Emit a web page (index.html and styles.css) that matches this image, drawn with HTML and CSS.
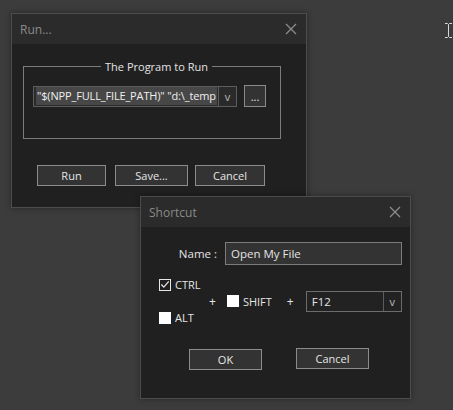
FILE: index.html
```html
<!DOCTYPE html>
<html lang="en">
<head>
  <meta charset="UTF-8">
  <meta name="viewport" content="width=device-width, initial-scale=1.0">
  <title>Run / Shortcut</title>
  <link rel="stylesheet" href="styles.css">
</head>
<body>
  <div class="desktop">

    <!-- Run dialog -->
    <div class="dialog run-dialog">
      <div class="titlebar">
        <span class="title">Run...</span>
        <svg class="close" width="12" height="12" viewBox="0 0 12 12"><path d="M1 1L11 11M11 1L1 11" stroke="#8c8c8c" stroke-width="1.3"/></svg>
      </div>
      <div class="dialog-body run-body">
        <fieldset class="group">
          <legend>The Program to Run</legend>
          <div class="group-row">
            <div class="combo program-combo">
              <div class="combo-text"><span class="selected">"$(NPP_FULL_FILE_PATH)" "d:\_temp</span></div>
              <div class="combo-arrow">v</div>
            </div>
            <button class="btn browse">...</button>
          </div>
        </fieldset>
        <div class="button-row run-buttons">
          <button class="btn run-btn">Run</button>
          <button class="btn save-btn">Save...</button>
          <button class="btn cancel-btn">Cancel</button>
        </div>
      </div>
    </div>

    <!-- Shortcut dialog -->
    <div class="dialog shortcut-dialog">
      <div class="titlebar">
        <span class="title">Shortcut</span>
        <svg class="close" width="12" height="12" viewBox="0 0 12 12"><path d="M1 1L11 11M11 1L1 11" stroke="#8c8c8c" stroke-width="1.3"/></svg>
      </div>
      <div class="dialog-body shortcut-body">
        <div class="name-row">
          <span class="name-label">Name :</span>
          <div class="textbox">Open My File</div>
        </div>
        <div class="keys-row">
          <div class="mods">
            <label class="check"><span class="box checked"><svg width="11" height="11" viewBox="0 0 11 11"><path d="M1.5 5.5L4.2 8.4L9.6 2" fill="none" stroke="#e6e6e6" stroke-width="1.4"/></svg></span>CTRL</label>
            <label class="check"><span class="box"></span>ALT</label>
          </div>
          <span class="plus plus-first">+</span>
          <label class="check"><span class="box"></span>SHIFT</label>
          <span class="plus plus-second">+</span>
          <div class="combo key-combo">
            <div class="combo-text">F12</div>
            <div class="combo-arrow">v</div>
          </div>
        </div>
        <div class="button-row shortcut-buttons">
          <button class="btn ok-btn">OK</button>
          <button class="btn cancel2-btn">Cancel</button>
        </div>
      </div>
    </div>

    <!-- text cursor -->
    <svg class="ibeam" width="9" height="17" viewBox="0 0 9 17"><path d="M1 1.5H3.5L4.5 2.5L5.5 1.5H8M4.5 2.5V14.5M1 15.5H3.5L4.5 14.5L5.5 15.5H8" fill="none" stroke="#d8d8d8" stroke-width="1"/></svg>
  </div>
</body>
</html>
```

FILE: styles.css
```css
body {
  margin: 0;
  background: #3c3c3c;
  font-family: "Open Sans", "Noto Sans", sans-serif;
  font-size: 11px;
  color: #e4e4e4;
}

.desktop {
  position: relative;
  width: 453px;
  height: 410px;
  overflow: hidden;
}

.dialog {
  position: absolute;
  background: #202020;
  border: 1px solid #4c4c4c;
  box-shadow: 0 0 6px rgba(0, 0, 0, 0.35);
  box-sizing: border-box;
  display: flex;
  flex-direction: column;
}

.run-dialog {
  left: 11px;
  top: 13px;
  width: 296px;
  height: 195px;
}

.shortcut-dialog {
  left: 140px;
  top: 196px;
  width: 271px;
  height: 203px;
}

.titlebar {
  height: 30px;
  background: #2b2b2b;
  display: flex;
  align-items: center;
  justify-content: space-between;
  padding: 0 9px 0 8px;
  flex-shrink: 0;
}

.title {
  color: #8a8a8a;
  font-size: 12px;
}

.close {
  display: block;
}

.btn {
  font-family: inherit;
  font-size: 11px;
  color: #e6e6e6;
  background: #333333;
  border: 1px solid #8c8c8c;
  box-sizing: border-box;
  padding: 0;
  height: 21px;
}

/* Run dialog */
.run-body {
  padding: 14px 0 0 11px;
}

.group {
  margin: 0;
  width: 258px;
  height: 81px;
  box-sizing: border-box;
  border: 1px solid #7c7c7c;
  padding: 10px 0 0 9px;
}

.group legend {
  margin: 0 auto;
  padding: 0 4px;
  font-size: 11px;
  line-height: 17px;
  color: #e4e4e4;
}

.group-row {
  display: flex;
  align-items: center;
  gap: 7px;
}

.combo {
  display: flex;
  border: 1px solid #5c5c5c;
  box-sizing: border-box;
  height: 21px;
  background: #2a2a2a;
}

.combo-text {
  flex: 1;
  min-width: 0;
  overflow: hidden;
  white-space: nowrap;
  display: flex;
  align-items: center;
  padding-left: 2px;
}

.combo-arrow {
  width: 17px;
  border-left: 1px solid #5c5c5c;
  display: flex;
  align-items: center;
  justify-content: center;
  color: #bdbdbd;
  font-size: 11px;
}

.program-combo {
  width: 204px;
}

.selected {
  background: #474747;
  color: #f0f0f0;
  padding: 1px 1px;
  line-height: 16px;
  letter-spacing: -0.15px;
}

.browse {
  width: 22px;
  height: 22px;
  line-height: 14px;
  padding-top: 2px;
  border-color: #8a8a8a;
}

.button-row {
  display: flex;
}

.run-buttons {
  margin-top: 26px;
  padding-left: 14px;
}

.run-btn {
  width: 69px;
}

.save-btn {
  width: 73px;
  margin-left: 9px;
}

.cancel-btn {
  width: 70px;
  margin-left: 7px;
}

/* Shortcut dialog */
.shortcut-body {
  padding: 15px 0 0 18px;
}

.name-row {
  display: flex;
  align-items: center;
}

.name-label {
  width: 58px;
  text-align: right;
  margin-right: 8px;
  font-size: 11.5px;
}

.textbox {
  width: 177px;
  height: 23px;
  box-sizing: border-box;
  border: 1px solid #7c7c7c;
  background: #333333;
  padding-left: 5px;
  display: flex;
  align-items: center;
  font-size: 11.5px;
}

.keys-row {
  display: flex;
  align-items: center;
  margin-top: 13px;
}

.mods {
  display: flex;
  flex-direction: column;
  gap: 20px;
  width: 50px;
}

.check {
  display: flex;
  align-items: center;
  gap: 4px;
  line-height: 13px;
}

.box {
  width: 12px;
  height: 12px;
  background: #ffffff;
  display: flex;
  align-items: center;
  justify-content: center;
}

.box.checked {
  background: transparent;
  border: 1px solid #e6e6e6;
  box-sizing: border-box;
}

.plus {
  font-size: 12px;
}

.plus-first {
  margin: 0 11px 0 0;
}

.plus-second {
  margin: 0 12px 0 15px;
}

.key-combo {
  width: 96px;
  border-color: #6c6c6c;
  background: #222222;
  height: 21px;
}

.key-combo .combo-text {
  padding-left: 5px;
  font-size: 11.5px;
}

.shortcut-buttons {
  margin-top: 24px;
  padding-left: 30px;
  align-items: flex-start;
}

.ok-btn {
  width: 73px;
  margin-top: 1px;
}

.cancel2-btn {
  width: 73px;
  margin-left: 34px;
}

.ibeam {
  position: absolute;
  left: 444px;
  top: 22px;
}
```
